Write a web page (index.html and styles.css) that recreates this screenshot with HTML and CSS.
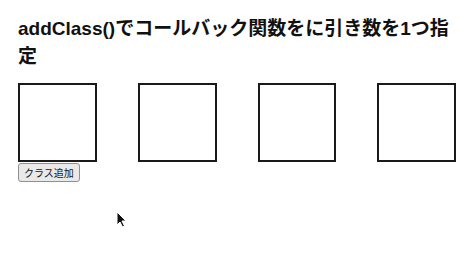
FILE: index.html
```html
<!DOCTYPE html>
<html lang="ja">
<head>
<meta charset="utf-8">
<link rel="stylesheet" href="styles.css">
</head>
<body>
<h1 class="title">addClass()でコールバック関数をに引き数を1つ指定</h1>
<div class="boxes">
  <div class="box"></div>
  <div class="box"></div>
  <div class="box"></div>
  <div class="box"></div>
</div>
<button class="btn">クラス追加</button>
<svg class="cursor" width="12" height="18" viewBox="0 0 12 18"><path d="M1 1 L1 14 L4 11 L6.5 16 L8.5 15 L6 10 L10 10 Z" fill="#111" stroke="#fff" stroke-width="1"/></svg>
</body>
</html>
```
FILE: styles.css
```css
html, body {
  margin: 0;
  background: #fff;
}
body {
  padding: 15px 18px 0;
  font-family: "Liberation Sans", "Noto Sans CJK JP", sans-serif;
  color: #111;
  position: relative;
  height: 279px;
  box-sizing: border-box;
}
.title {
  margin: 0;
  font-size: 19px;
  font-weight: bold;
  line-height: 28px;
  font-family: "Liberation Sans", "Noto Sans CJK JP", sans-serif;
}
.boxes {
  display: flex;
  gap: 41px;
  margin-top: 12px;
}
.box {
  width: 75px;
  height: 75px;
  border: 2px solid #1a1a1a;
}
.btn {
  display: block;
  margin-top: 1px;
  font-family: "Noto Sans CJK JP", sans-serif;
  font-size: 10px;
  line-height: 15px;
  padding: 1px 5px;
  background: #e9e9e9;
  border: 1px solid #8f8f8f;
  border-radius: 3px;
  color: #111;
}
.cursor {
  position: absolute;
  left: 116px;
  top: 211px;
}
```
